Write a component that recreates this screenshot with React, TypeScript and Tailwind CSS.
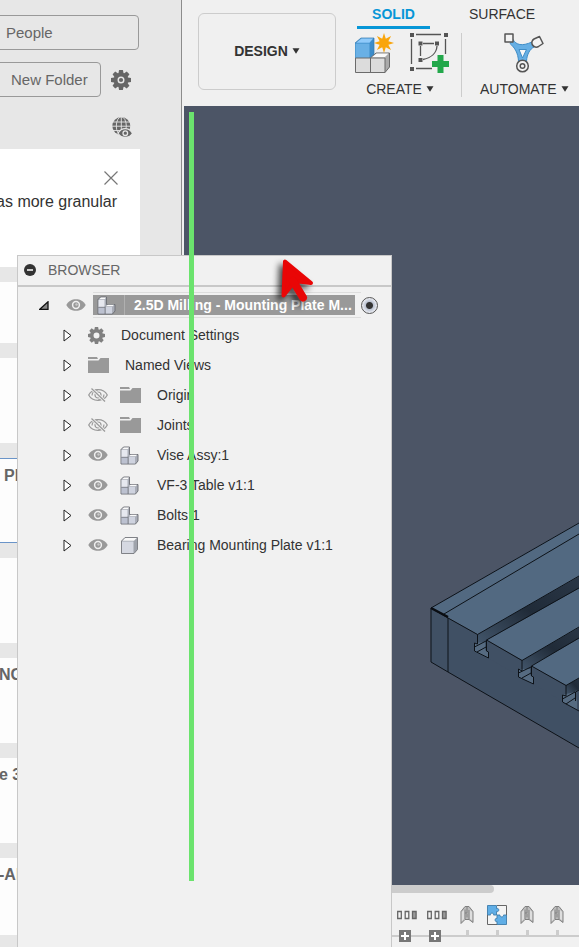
import type { ReactNode } from "react";

const TEETH = [0, 45, 90, 135, 180, 225, 270, 315];

function Gear({ className, dot = false }: { className: string; dot?: boolean }) {
  return (
    <svg viewBox="0 0 20 20" className={className} aria-hidden="true">
      {TEETH.map((a) => (
        <path key={a} d="M7.2 4.5 8.1 0h3.8l.9 4.5z" fill="currentColor" transform={`rotate(${a} 10 10)`} />
      ))}
      <circle cx="10" cy="10" r="5.4" fill="none" stroke="currentColor" strokeWidth="3.8" />
      {dot && <circle cx="10" cy="10" r="2.1" fill="currentColor" />}
    </svg>
  );
}

function GlobeEye() {
  return (
    <svg viewBox="0 0 20 20" className="h-5 w-5" aria-hidden="true">
      <circle cx="9.3" cy="9" r="9" fill="#666" />
      <g fill="none" stroke="#e7e7e7" strokeWidth=".9">
        <path d="M0 5h19M0 9.2h19M0 13.500h19M9.3 0v18" />
        <ellipse cx="9.3" cy="9" rx="5" ry="9.2" />
      </g>
      <path d="M6 16.200c3.500-6.200 11-6.200 14.500 0-3.500 5.500-11 5.500-14.500 0z" fill="#666" stroke="#e7e7e7" strokeWidth="1.200" />
      <circle cx="13.300" cy="16.200" r="2.300" fill="#666" stroke="#e7e7e7" strokeWidth="1.300" />
    </svg>
  );
}

function Eye() {
  return (
    <svg viewBox="0 0 20 14" className="h-[14px] w-5" aria-hidden="true">
      <path d="M.3 7C4-.8 16-.8 19.700 7 16 14.800 4 14.800.3 7z" fill="#999" />
      <circle cx="10" cy="7" r="3.400" fill="#999" stroke="#f0f0f0" strokeWidth="1.500" />
      <circle cx="10.500" cy="6.500" r="1.200" fill="#c8c8c8" />
    </svg>
  );
}

function HiddenEye() {
  return (
    <svg viewBox="0 0 20 14" className="h-[14px] w-5" fill="none" stroke="#999" strokeWidth="1.200" aria-hidden="true">
      <path d="M.7 7C4.500-.2 15.500-.2 19.300 7 15.500 14.200 4.500 14.200.7 7z" />
      <path d="M4 7.500C4 4.500 6.500 2 10 2M16 6.500c0 3-2.500 5.500-6 5.500" />
      <circle cx="10" cy="7" r="3" />
      <path d="M3.500.5l13.500 13" stroke="#f0f0f0" strokeWidth="3" />
      <path d="M3.500.5l13.500 13" />
    </svg>
  );
}

function Folder() {
  return (
    <svg viewBox="0 0 21 16" className="h-4 w-[21px]" fill="#999" aria-hidden="true">
      <path d="M0 0h9l1 2H0zM0 3.500h10.500L12.500 1H21v15H0z" />
    </svg>
  );
}

function Assembly() {
  return (
    <svg viewBox="0 0 19 19" className="h-[19px] w-[19px]" strokeLinejoin="round" aria-hidden="true">
      <path d="M1 3.500 3.500 1H9.500V8.500H16L18 8.500V15l-2.500 3H1z" fill="#a9adb7" stroke="#6a6c72" strokeWidth=".9" />
      <path d="M1.500 4H7.500v7H1.500z" fill="#e6e8ef" />
      <path d="M1.500 11.500H7.500V17.500H1.500z" fill="#bcc1d0" />
      <path d="M8.500 11H15v6.500H8.500z" fill="#cfd3df" />
      <path d="M2 3.300 4 1.500h5L7.700 3.300zM9 10.300l1.700-1.500h6.500l-1.700 1.500z" fill="#fafafa" />
      <path d="M1.500 11.300H8M8.200 10.500V18" stroke="#777b84" strokeWidth=".8" fill="none" />
    </svg>
  );
}

function Body() {
  return (
    <svg viewBox="0 0 19 19" className="h-[19px] w-[19px]" strokeLinejoin="round" aria-hidden="true">
      <path d="M1.500 5 5 1.500H17.500V13.500L14 17.500H1.500z" fill="#9fa3ab" stroke="#77797f" strokeWidth=".9" />
      <path d="M2 5.500H13.500V17H2z" fill="#d5d8e1" />
      <path d="M2.500 4.800 5.300 2h11.500L14 4.800z" fill="#f8f8f8" />
    </svg>
  );
}

function CreateBodyIcon() {
  return (
    <svg viewBox="0 0 39 40" className="h-10 w-[39px]" strokeLinejoin="round" aria-hidden="true">
      <path d="M0 10 6 5H19V22L15 25H0z" fill="#3c8cca" stroke="#3479ad" strokeWidth=".7" />
      <path d="M.5 10.500H14.500V25H.5z" fill="#69b0e5" />
      <path d="M1.200 9.700 6.500 5.500H18.200L14.500 9.700z" fill="#8fcafa" />
      <path d="M15.500 25 21 20H34.500V34L30 39.500H15.500z" fill="#aaa" stroke="#6b6b6b" />
      <path d="M16.500 24.500 21.500 20.500H33.500L29.500 24.500z" fill="#fafafa" />
      <path d="M.5 25H15.500V39.500H.5zM15.500 25H30V39.500H15.500z" fill="#dcdcdc" stroke="#6b6b6b" />
      {TEETH.map((a) => (
        <path key={a} d="M25.500 11 29 0 32.500 11z" fill="#f9a50b" transform={`rotate(${a} 29 10)`} />
      ))}
    </svg>
  );
}

function SketchIcon() {
  return (
    <svg viewBox="0 0 39 40" className="h-10 w-[39px]" fill="none" stroke="#555" strokeWidth="1.300" aria-hidden="true">
      <path d="M1.500 6V31M6 1.500H31M35.500 6V21M6 35.500H22M10.500 13V23M13 10.500H24M27 13C26.500 20 21 25 13 26.500" />
      <path d="M0 0h4v4H0zM34 0h4v4h-4zM0 34h4v4H0zM8.500 8.500h4v4h-4zM25 8.500h4v4h-4zM8.500 25h4v4h-4z" fill="#555" stroke="none" />
      <path d="M27.500 22h6v6H39v6h-5.500v6h-6v-6H22v-6h5.500z" fill="#23a84b" stroke="none" />
    </svg>
  );
}

function AutomateIcon() {
  return (
    <svg viewBox="0 0 40 40" className="h-10 w-10" strokeLinejoin="round" aria-hidden="true">
      <path d="M9 6.500C12 12 18 13.500 28 9L30 14C26 16 23 21 22.500 28H14.500C14 20 11 15 6 10.500z" fill="#66afe4" stroke="#3f8dc7" />
      <path d="M15 16.500H22.500L18.500 25z" fill="#f7f7f7" stroke="#3f8dc7" />
      <g fill="#f3f3f3" stroke="#555" strokeWidth="1.500">
        <path d="M1 1H9V9H1zM30 6 35.500 3.500 39 10.500 34.500 13.500A4.200 4.200 0 1 1 30 6z" />
        <circle cx="18.500" cy="33" r="5.800" />
        <circle cx="18.500" cy="33" r="2.300" />
      </g>
    </svg>
  );
}

function Caret() {
  return (
    <svg viewBox="0 0 8 6" className="h-[6px] w-2" aria-hidden="true">
      <path d="M.5.300h7L4 5.700z" fill="#333" />
    </svg>
  );
}

function MachineTable() {
  return (
    <svg viewBox="424 518 155 234" className="absolute top-[412px] left-[240px] h-[234px] w-[155px]" strokeLinejoin="round" aria-label="Mounting plate model" role="img">
      <defs>
        <linearGradient id="groove" x1="0" y1="1" x2="1" y2="0">
          <stop offset="0" stopColor="#465a70" />
          <stop offset=".5" stopColor="#202b38" />
          <stop offset="1" stopColor="#2b3848" />
        </linearGradient>
      </defs>
      <path d="M431 608V662L448 672 585 751V640L531 666 487 640z" fill="#405064" />
      <path d="M431 608 585 519V690L566 685 531 666 522 660 487 640 477 634z" fill="#526981" />
      <path d="M477.500 634.500 585 573V585L487 640 486 651 477.500 645z" fill="url(#groove)" />
      <path d="M522 660.500 585 624V635L531 666V675L522 670z" fill="url(#groove)" />
      <path d="M566 685.500 585 675V687L575 691V697L566 695z" fill="url(#groove)" />
      <path d="M448 618 477 634V645L488 658 522 662V675L533 684 566 687V703L585 713V751L448 672z" fill="#405064" />
      <path d="M486 640 522 660V668L519 676 488 658zM531 666 566 685V694L562 701 533 684z" fill="#405064" />
      <path d="M474 643V651L488 658V652L485 650V642zM519 669V677L533 684V677L530 675V669zM562 695V702L577 710V701L575 692z" fill="#566b81" />
      <g fill="none" stroke="#0d1218" strokeWidth="1">
        <path d="M431 608 579 523M444 614 579 534M431 608 448 618 477.500 634.500 579 576M486.500 640 579 588M486.500 640 522 660.500 579 627M531.500 666 579 638M531.500 666 566 685.500 579 678" />
        <path d="M431 608V662L448 672 579 748M448 618V672" />
        <path d="M477.500 634.500V644L474.500 643V651L488.500 658V652L486.500 651V640M474.500 647 486 641M477 652 486 647" />
        <path d="M522 660.500V671L518.500 669V677L533.500 684V677L531.500 676V666M518.500 673 531 667M522 678 531 673" />
        <path d="M566 685.500V696L562.500 695V702L579 711M575.500 701V692L579 690M562.500 699 575 692M566 704 575 698" />
      </g>
      <path d="M431 608 448 617" stroke="#0a0d12" strokeWidth="2.500" />
    </svg>
  );
}

function DropButton({ label }: { label: string }) {
  return (
    <button type="button" className="flex items-center gap-1 text-sm leading-4 text-[#333]">
      {label}
      <Caret />
    </button>
  );
}

function TreeRow({ label, children }: { label: string; children: ReactNode }) {
  return (
    <li className="flex h-[30px] items-center pl-11">
      <button type="button" aria-label={`Expand ${label}`} className="flex w-[10px] justify-center">
        <svg viewBox="0 0 9 13" className="h-[13px] w-[9px]" aria-hidden="true">
          <path d="M1 1V12L8 6.500z" fill="#fff" stroke="#222" />
        </svg>
      </button>
      <span className="ml-4 flex items-center gap-3">{children}</span>
      <span className="ml-4 text-sm whitespace-nowrap text-[#333]">{label}</span>
    </li>
  );
}

const PARTS = ["Vise Assy:1", "VF-3 Table v1:1", "Bolts:1"];

function BrowserPanel() {
  return (
    <section className="absolute top-[255px] bottom-0 left-[17px] w-[375px] border border-b-0 border-[#c8c8c8] bg-[#f1f1f1]">
      <header className="flex h-[31px] items-center gap-3 border-b-2 border-[#c8c8c8] pb-px pl-[6px]">
        <button type="button" aria-label="Collapse browser" className="flex h-3 w-3 items-center justify-center rounded-full bg-[#333]">
          <span className="h-[2px] w-[6px] bg-[#ccc]" />
        </button>
        <h2 className="text-sm text-[#666]">BROWSER</h2>
      </header>
      <div className="mt-[3px] flex h-[30px] items-center pl-[21px]">
        <button type="button" aria-label="Collapse document" className="w-[11px]">
          <svg viewBox="0 0 10 9" className="h-[9px] w-[10px]" aria-hidden="true">
            <path d="M.8 8.300 9 .8V8.300z" fill="#888" stroke="#111" strokeWidth="1.300" />
          </svg>
        </button>
        <span className="ml-4 flex">
          <Eye />
        </span>
        <div className="ml-[7px] border-y border-[#ddd] py-[2px] pr-[6px]">
          <div className="flex h-5 w-[262px] items-center bg-[#999]">
            <span className="flex h-full w-8 items-center border-r border-[#b0b0b0] pl-1">
              <Assembly />
            </span>
            <span className="pl-[9px] text-sm font-bold whitespace-nowrap text-white">2.5D Milling - Mounting Plate M...</span>
          </div>
        </div>
        <input
          type="radio"
          name="active-document"
          defaultChecked
          aria-label="Activate document"
          className="h-[17px] w-[17px] appearance-none rounded-full border border-[#555] bg-[radial-gradient(circle,#333_0_3px,#bcc3d2_4px,#f4f5f9_8px)]"
        />
      </div>
      <ul>
        <TreeRow label="Document Settings">
          <Gear className="h-[17px] w-[17px] text-[#808080]" />
        </TreeRow>
        <TreeRow label="Named Views">
          <Folder />
        </TreeRow>
        {["Origin", "Joints"].map((name) => (
          <TreeRow key={name} label={name}>
            <HiddenEye />
            <Folder />
          </TreeRow>
        ))}
        {PARTS.map((name) => (
          <TreeRow key={name} label={name}>
            <Eye />
            <span className="w-[21px]">
              <Assembly />
            </span>
          </TreeRow>
        ))}
        <TreeRow label="Bearing Mounting Plate v1:1">
          <Eye />
          <span className="w-[21px]">
            <Body />
          </span>
        </TreeRow>
      </ul>
    </section>
  );
}

function ProjectCard({ text = "", look = "h-[85px]" }: { text?: string; look?: string }) {
  return (
    <li className={`shrink-0 bg-[#fdfdfd] pt-[5px] text-base font-bold whitespace-nowrap text-[#666] ${look}`}>{text}</li>
  );
}

function DataPanel() {
  return (
    <aside className="flex w-[184px] shrink-0 flex-col overflow-hidden border-r-2 border-[#f0f0f0] bg-[#e7e7e7]">
      <div className="flex flex-1 flex-col border-r border-[#8c8c8c]">
        <button type="button" className="mt-[15px] -ml-2 h-[35px] w-[147px] rounded border border-[#999] pt-px pl-[13px] text-left text-[15px] text-[#666]">
          People
        </button>
        <div className="mt-3 flex items-center gap-[10px]">
          <button type="button" className="-ml-1 h-[35px] w-[105px] rounded border border-[#999] pt-[2px] pl-[14px] text-left text-[15px] text-[#666]">
            New Folder
          </button>
          <button type="button" aria-label="Settings">
            <Gear dot className="h-5 w-5 text-[#666]" />
          </button>
        </div>
        <button type="button" aria-label="Open on the web" className="mt-5 ml-[112px] w-5">
          <GlobeEye />
        </button>
        <div className="mt-3 flex h-[118px] w-[140px] shrink-0 flex-col items-end bg-white pt-[22px]">
          <button type="button" aria-label="Close" className="mr-[22px]">
            <svg viewBox="0 0 14 14" className="h-[14px] w-[14px]" aria-hidden="true">
              <path d="M.5.5l13 13M13.500.5l-13 13" stroke="#777" strokeWidth="1.200" />
            </svg>
          </button>
          <p className="mt-[5px] mr-[23px] text-base whitespace-nowrap text-[#333]">as more granular</p>
        </div>
        <ul className="mt-[15px] flex flex-col gap-[15px]">
          <ProjectCard look="h-[61px]" />
          <ProjectCard />
          <ProjectCard text="PL" look="h-[85px] border-y border-[#6a94c8] pl-1" />
          <ProjectCard />
          <ProjectCard text="NG" look="h-[85px] -ml-px" />
          <ProjectCard text="e 3D" look="h-[85px] -ml-px" />
          <ProjectCard text="-AD" look="h-[77px] -ml-px" />
        </ul>
      </div>
    </aside>
  );
}

function Toolbar() {
  return (
    <header className="flex h-[106px] shrink-0 overflow-hidden bg-[#f0f0f0] pl-[14px]">
      <button type="button" className="mt-[13px] flex h-[77px] w-[138px] shrink-0 items-center justify-center gap-1 rounded-md border border-[#ccc] pb-[2px] text-sm font-bold text-[#333]">
        DESIGN
        <Caret />
      </button>
      <div className="ml-[19px] flex flex-col">
        <nav className="ml-[2px] flex h-[29px] gap-[39px] pt-1 text-sm text-[#333]">
          <button type="button" className="w-[73px] border-b-3 border-[#0696d7] pb-[2px] font-bold text-[#0696d7]">
            SOLID
          </button>
          <button type="button" className="pb-[5px]">SURFACE</button>
        </nav>
        <div className="mt-1 flex h-16">
          <div className="flex w-[107px] flex-col items-center border-r border-[#ccc]">
            <div className="flex w-full gap-4">
              <button type="button" aria-label="New component"><CreateBodyIcon /></button>
              <button type="button" aria-label="Create sketch"><SketchIcon /></button>
            </div>
            <div className="mt-2 mr-[16px]">
              <DropButton label="CREATE" />
            </div>
          </div>
          <div className="ml-[18px] flex flex-col items-center">
            <button type="button" aria-label="Automated modeling"><AutomateIcon /></button>
            <div className="mt-2">
              <DropButton label="AUTOMATE" />
            </div>
          </div>
        </div>
      </div>
    </header>
  );
}

function GroupFeature() {
  return (
    <svg viewBox="0 0 20 20" className="h-5 w-5 shrink-0" fill="#f4f4f4" stroke="#666" strokeWidth="1.300" aria-hidden="true">
      <path d="M.7 6.500h3.600v7H.7zM8.200 6.500h3.600v7H8.200z" />
      <path d="M15.500 6.500h3.600v7h-3.600z" fill="#999" />
    </svg>
  );
}

function JointFeature() {
  return (
    <svg viewBox="0 0 20 20" className="h-5 w-5 shrink-0" strokeLinejoin="round" aria-hidden="true">
      <path d="M4 6.500 8 1.500H12L16 6.500V17.500L12 14.500H8L4 18.500z" fill="#bcbcbc" stroke="#808080" />
      <path d="M4.700 7 7.500 4.500V13.500L4.700 16.500zM12.500 4.500l2.700 2.500V15.500l-2.700-2z" fill="#dedede" />
      <path d="M10 2V8H8M12 5V14M8 4.500V14M10 8.500v4" stroke="#808080" fill="none" />
    </svg>
  );
}

function PuzzleFeature() {
  return (
    <svg viewBox="0 0 20 20" className="h-5 w-5 shrink-0" aria-hidden="true">
      <path d="M.5.5h19v19H.5z" fill="#f4f4f4" />
      <path d="M.5.5H9.500V3.500C12.500 2.500 12.500 7.500 9.500 6.500V10H6.500C7.500 7.500 2.500 7.500 3.500 10H.5zM10 19.500V16.500C7.500 17.500 7.500 12.500 10 13.500V10H13C12.500 12.500 17 12.500 16.500 10H19.500V19.500z" fill="#60aee6" stroke="#3d7dac" strokeWidth=".9" />
      <path d="M10 .5H19.500V10M.5 10V19.500H10" fill="none" stroke="#666" />
    </svg>
  );
}

const FEATURES = ["group", "group", "joint", "puzzle", "joint", "joint", "joint"];

function Timeline() {
  return (
    <footer className="h-[62px] shrink-0 overflow-hidden bg-[#f1f1f1] pl-[208px]">
      <div className="h-2 w-[102px] rounded-r bg-[#ccc]" />
      <div className="mt-3 flex h-[32px] border-b-2 border-[#ccc]">
        {FEATURES.map((kind, i) => (
          <button key={i} type="button" aria-label={`Feature ${i + 1}`} className="flex w-[30px] shrink-0 flex-col items-center justify-start gap-[5px]">
            {kind === "group" ? <GroupFeature /> : kind === "joint" ? <JointFeature /> : <PuzzleFeature />}
            {kind === "group" ? (
              <svg viewBox="0 0 12 12" className="mr-1 h-3 w-3 shrink-0" aria-hidden="true">
                <path d="M0 0h12v12H0z" fill="#777" />
                <path d="M6 2v8M2 6h8" stroke="#fff" strokeWidth="2" />
              </svg>
            ) : (
              <span className="h-[5px] w-[3px] shrink-0 bg-[#ccc]" />
            )}
          </button>
        ))}
      </div>
    </footer>
  );
}

export default function App() {
  return (
    <div className="relative flex h-screen overflow-hidden bg-[#f1f1f1] font-['Liberation_Sans',Arial,sans-serif]">
      <DataPanel />
      <div className="flex min-w-0 flex-1 flex-col">
        <Toolbar />
        <main className="relative flex-1 overflow-hidden bg-[#4c5566]">
          <MachineTable />
        </main>
        <Timeline />
      </div>
      <BrowserPanel />
      <div className="absolute top-[112px] left-[189px] h-[769px] w-[5px] bg-[#6be36d]" />
      <svg
        viewBox="0 0 44 50"
        className="absolute top-[255px] left-[274px] h-[50px] w-11 overflow-visible drop-shadow-[-4px_4px_3px_rgba(0,0,0,0.7)]"
        fill="#e90606"
        stroke="#e90606"
        strokeLinejoin="round"
        strokeLinecap="round"
        aria-hidden="true"
      >
        <path d="M11 6.500 9.500 40.500 18 30 25 26.500 37 28z" strokeWidth="4" />
        <path d="M19 26 29 42.500" strokeWidth="8" />
      </svg>
    </div>
  );
}
